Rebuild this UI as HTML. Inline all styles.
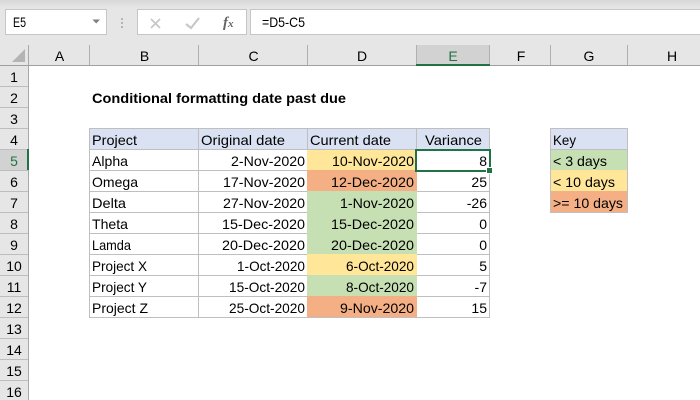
<!DOCTYPE html>
<html>
<head>
<meta charset="utf-8">
<style>
html,body{margin:0;padding:0;background:#fff;width:700px;height:400px;overflow:hidden}
svg{display:block}
text{font-family:"Liberation Sans",sans-serif;font-size:14px;fill:#000}
.r{shape-rendering:crispEdges}
</style>
</head>
<body>
<svg width="700" height="400" viewBox="0 0 700 400" xmlns="http://www.w3.org/2000/svg">
<defs><linearGradient id="t" x1="0" y1="0" x2="0" y2="1"><stop offset="0" stop-color="#d8d8d8"/><stop offset="1" stop-color="#e6e6e6"/></linearGradient></defs>
<g class="r">
<rect x="0" y="0" width="700" height="65" fill="#e6e6e6"/>
<rect x="0" y="0" width="700" height="8" fill="url(#t)"/>
<rect x="5.5" y="9.5" width="101" height="25" fill="#fff" stroke="#c6c6c6"/>
<rect x="137.5" y="9.5" width="109" height="25" fill="#fff" stroke="#c6c6c6"/>
<rect x="250.5" y="9.5" width="460" height="25" fill="#fff" stroke="#c6c6c6"/>
<rect x="121" y="18" width="2" height="2" fill="#b5b5b5"/>
<rect x="121" y="22" width="2" height="2" fill="#b5b5b5"/>
<rect x="121" y="26" width="2" height="2" fill="#b5b5b5"/>
<rect x="416" y="45" width="74" height="20" fill="#d2d2d2"/>
<rect x="0" y="65" width="28" height="335" fill="#e6e6e6"/>
<rect x="0" y="149" width="28" height="21" fill="#d2d2d2"/>
<rect x="28" y="45" width="1" height="355" fill="#a8a8a8"/>
<rect x="89" y="45" width="1" height="20" fill="#b0b0b0"/>
<rect x="198" y="45" width="1" height="20" fill="#b0b0b0"/>
<rect x="307" y="45" width="1" height="20" fill="#b0b0b0"/>
<rect x="416" y="45" width="1" height="20" fill="#b0b0b0"/>
<rect x="489" y="45" width="1" height="20" fill="#b0b0b0"/>
<rect x="550" y="45" width="1" height="20" fill="#b0b0b0"/>
<rect x="627" y="45" width="1" height="20" fill="#b0b0b0"/>
<rect x="0" y="65" width="700" height="1" fill="#9f9f9f"/>
<rect x="416" y="64" width="74" height="2" fill="#217346"/>
<rect x="0" y="86" width="28" height="1" fill="#bdbdbd"/>
<rect x="0" y="107" width="28" height="1" fill="#bdbdbd"/>
<rect x="0" y="128" width="28" height="1" fill="#bdbdbd"/>
<rect x="0" y="149" width="28" height="1" fill="#bdbdbd"/>
<rect x="0" y="170" width="28" height="1" fill="#bdbdbd"/>
<rect x="0" y="191" width="28" height="1" fill="#bdbdbd"/>
<rect x="0" y="212" width="28" height="1" fill="#bdbdbd"/>
<rect x="0" y="233" width="28" height="1" fill="#bdbdbd"/>
<rect x="0" y="254" width="28" height="1" fill="#bdbdbd"/>
<rect x="0" y="275" width="28" height="1" fill="#bdbdbd"/>
<rect x="0" y="296" width="28" height="1" fill="#bdbdbd"/>
<rect x="0" y="317" width="28" height="1" fill="#bdbdbd"/>
<rect x="0" y="338" width="28" height="1" fill="#bdbdbd"/>
<rect x="0" y="359" width="28" height="1" fill="#bdbdbd"/>
<rect x="0" y="380" width="28" height="1" fill="#bdbdbd"/>
<rect x="27" y="149" width="2" height="21" fill="#217346"/>

<!-- table fills -->
<rect x="89" y="128" width="401" height="21" fill="#d9e1f2"/>
<rect x="307" y="149" width="110" height="21" fill="#ffe699"/>
<rect x="307" y="170" width="110" height="21" fill="#f4b084"/>
<rect x="307" y="191" width="110" height="21" fill="#c6e0b4"/>
<rect x="307" y="212" width="110" height="21" fill="#c6e0b4"/>
<rect x="307" y="233" width="110" height="21" fill="#c6e0b4"/>
<rect x="307" y="254" width="110" height="21" fill="#ffe699"/>
<rect x="307" y="275" width="110" height="21" fill="#c6e0b4"/>
<rect x="307" y="296" width="110" height="21" fill="#f4b084"/>
<!-- table lines -->
<rect x="89" y="128" width="401" height="1" fill="#bfbfbf"/>
<rect x="89" y="149" width="401" height="1" fill="#bfbfbf"/>
<rect x="89" y="170" width="218" height="1" fill="#bfbfbf"/><rect x="417" y="170" width="73" height="1" fill="#bfbfbf"/>
<rect x="89" y="191" width="218" height="1" fill="#bfbfbf"/><rect x="417" y="191" width="73" height="1" fill="#bfbfbf"/>
<rect x="89" y="212" width="218" height="1" fill="#bfbfbf"/><rect x="417" y="212" width="73" height="1" fill="#bfbfbf"/>
<rect x="89" y="233" width="218" height="1" fill="#bfbfbf"/><rect x="417" y="233" width="73" height="1" fill="#bfbfbf"/>
<rect x="89" y="254" width="218" height="1" fill="#bfbfbf"/><rect x="417" y="254" width="73" height="1" fill="#bfbfbf"/>
<rect x="89" y="275" width="218" height="1" fill="#bfbfbf"/><rect x="417" y="275" width="73" height="1" fill="#bfbfbf"/>
<rect x="89" y="296" width="218" height="1" fill="#bfbfbf"/><rect x="417" y="296" width="73" height="1" fill="#bfbfbf"/>
<rect x="89" y="317" width="401" height="1" fill="#bfbfbf"/>
<rect x="89" y="128" width="1" height="190" fill="#bfbfbf"/>
<rect x="198" y="128" width="1" height="190" fill="#bfbfbf"/>
<rect x="307" y="128" width="1" height="21" fill="#bfbfbf"/>
<rect x="416" y="128" width="1" height="21" fill="#bfbfbf"/>
<rect x="489" y="128" width="1" height="190" fill="#bfbfbf"/>
<!-- key -->
<rect x="550" y="128" width="78" height="21" fill="#d9e1f2"/>
<rect x="550" y="149" width="78" height="21" fill="#c6e0b4"/>
<rect x="550" y="170" width="78" height="21" fill="#ffe699"/>
<rect x="550" y="191" width="78" height="22" fill="#f4b084"/>
<rect x="550" y="128" width="78" height="1" fill="#bfbfbf"/>
<rect x="550" y="149" width="78" height="1" fill="#bfbfbf"/>
<rect x="550" y="212" width="78" height="1" fill="#bfbfbf"/>
<rect x="550" y="128" width="1" height="85" fill="#bfbfbf"/>
<rect x="627" y="128" width="1" height="85" fill="#bfbfbf"/>
<!-- selection -->
<rect x="416" y="150" width="74" height="21" fill="#fff" stroke="#217346" stroke-width="2"/>
<rect x="486" y="167" width="7" height="7" fill="#fff"/>
<rect x="487" y="168" width="5" height="5" fill="#217346"/>
</g>

<!-- corner & toolbar icons -->
<path d="M12 62 L25 62 L25 49 Z" fill="#b4b4b4"/>
<path d="M92.5 19.5 L100 19.5 L96.2 23.5 Z" fill="#7f7f7f"/>
<path d="M151 19 L160 28 M160 19 L151 28" stroke="#c8c8c8" stroke-width="1.8" fill="none"/>
<path d="M186 24 L191 28 L199 18" stroke="#c8c8c8" stroke-width="2.2" fill="none"/>
<text x="223" y="27" style="font-family:'Liberation Serif',serif;font-style:italic;font-weight:bold;font-size:15px;fill:#666">f<tspan font-size="11">x</tspan></text>
<text x="13" y="27" textLength="13" lengthAdjust="spacingAndGlyphs">E5</text>
<text x="262" y="27" textLength="43" lengthAdjust="spacingAndGlyphs">=D5-C5</text>

<!-- column headers -->
<g text-anchor="middle">
<text x="59.5" y="61">A</text><text x="144.5" y="61">B</text><text x="253.5" y="61">C</text><text x="362" y="61">D</text>
<text x="453" y="61" style="fill:#217346">E</text><text x="521" y="61">F</text><text x="589" y="61">G</text><text x="672" y="61">H</text>
<text x="14" y="82">1</text><text x="14" y="103">2</text><text x="14" y="124">3</text><text x="14" y="145">4</text>
<text x="14" y="166" style="fill:#217346">5</text><text x="14" y="187">6</text><text x="14" y="208">7</text><text x="14" y="229">8</text>
<text x="14" y="250">9</text><text x="14" y="271">10</text><text x="14" y="292">11</text><text x="14" y="313">12</text>
<text x="14" y="334">13</text><text x="14" y="355">14</text><text x="14" y="376">15</text><text x="14" y="397">16</text>
</g>

<text x="92" y="103" textLength="254" lengthAdjust="spacingAndGlyphs" style="font-weight:bold">Conditional formatting date past due</text>

<text x="92" y="145" textLength="45" lengthAdjust="spacingAndGlyphs">Project</text>
<text x="201" y="145" textLength="84" lengthAdjust="spacingAndGlyphs">Original date</text>
<text x="310" y="145" textLength="81" lengthAdjust="spacingAndGlyphs">Current date</text>
<text x="425" y="145" textLength="57" lengthAdjust="spacingAndGlyphs">Variance</text>

<text x="92" y="166" textLength="36" lengthAdjust="spacingAndGlyphs">Alpha</text>
<text x="92" y="187" textLength="46" lengthAdjust="spacingAndGlyphs">Omega</text>
<text x="92" y="208" textLength="34" lengthAdjust="spacingAndGlyphs">Delta</text>
<text x="92" y="229" textLength="36" lengthAdjust="spacingAndGlyphs">Theta</text>
<text x="92" y="250" textLength="39" lengthAdjust="spacingAndGlyphs">Lamda</text>
<text x="92" y="271" textLength="55" lengthAdjust="spacingAndGlyphs">Project X</text>
<text x="92" y="292" textLength="55" lengthAdjust="spacingAndGlyphs">Project Y</text>
<text x="92" y="313" textLength="56" lengthAdjust="spacingAndGlyphs">Project Z</text>

<text x="231" y="166" textLength="74" lengthAdjust="spacingAndGlyphs">2-Nov-2020</text>
<text x="223" y="187" textLength="82" lengthAdjust="spacingAndGlyphs">17-Nov-2020</text>
<text x="223" y="208" textLength="82" lengthAdjust="spacingAndGlyphs">27-Nov-2020</text>
<text x="222" y="229" textLength="83" lengthAdjust="spacingAndGlyphs">15-Dec-2020</text>
<text x="222" y="250" textLength="83" lengthAdjust="spacingAndGlyphs">20-Dec-2020</text>
<text x="237" y="271" textLength="68" lengthAdjust="spacingAndGlyphs">1-Oct-2020</text>
<text x="229" y="292" textLength="76" lengthAdjust="spacingAndGlyphs">15-Oct-2020</text>
<text x="229" y="313" textLength="76" lengthAdjust="spacingAndGlyphs">25-Oct-2020</text>

<text x="332" y="166" textLength="82" lengthAdjust="spacingAndGlyphs">10-Nov-2020</text>
<text x="331" y="187" textLength="83" lengthAdjust="spacingAndGlyphs">12-Dec-2020</text>
<text x="340" y="208" textLength="74" lengthAdjust="spacingAndGlyphs">1-Nov-2020</text>
<text x="331" y="229" textLength="83" lengthAdjust="spacingAndGlyphs">15-Dec-2020</text>
<text x="331" y="250" textLength="83" lengthAdjust="spacingAndGlyphs">20-Dec-2020</text>
<text x="346" y="271" textLength="68" lengthAdjust="spacingAndGlyphs">6-Oct-2020</text>
<text x="346" y="292" textLength="68" lengthAdjust="spacingAndGlyphs">8-Oct-2020</text>
<text x="340" y="313" textLength="74" lengthAdjust="spacingAndGlyphs">9-Nov-2020</text>

<g text-anchor="end">
<text x="487" y="166">8</text><text x="487" y="187">25</text><text x="487" y="208">-26</text><text x="487" y="229">0</text>
<text x="487" y="250">0</text><text x="487" y="271">5</text><text x="487" y="292">-7</text><text x="487" y="313">15</text>
</g>

<text x="553" y="145" textLength="23" lengthAdjust="spacingAndGlyphs">Key</text>
<text x="553" y="166" textLength="54" lengthAdjust="spacingAndGlyphs">&lt; 3 days</text>
<text x="553" y="187" textLength="62" lengthAdjust="spacingAndGlyphs">&lt; 10 days</text>
<text x="553" y="208" textLength="70" lengthAdjust="spacingAndGlyphs">&gt;= 10 days</text>
</svg>
</body>
</html>
